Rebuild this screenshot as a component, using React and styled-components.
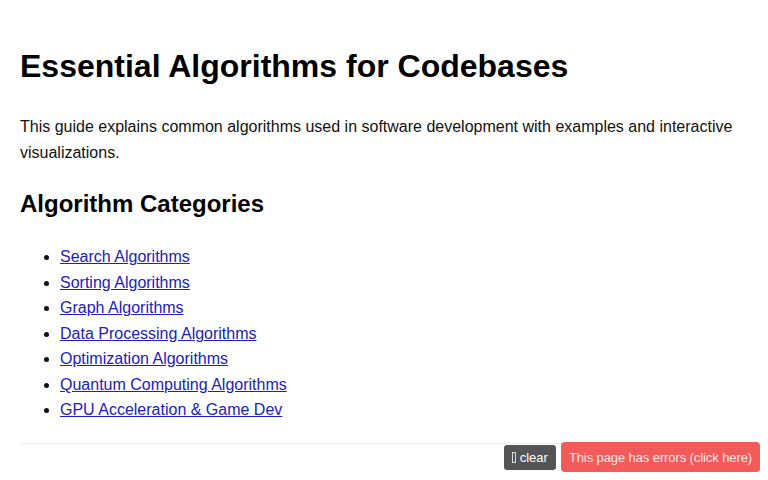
import React from "react";
import styled, { createGlobalStyle } from "styled-components";

const Global = createGlobalStyle`
  html, body { margin: 0; padding: 0; background: #fff; }
  body {
    font-family: "Liberation Sans", Arial, sans-serif;
    font-size: 16px;
    line-height: 1.6;
    color: #111;
  }
`;

const Page = styled.main`
  padding: 20px;
`;

const Title = styled.h1`
  font-size: 32px;
  line-height: 1.2;
  margin: 27px 0 29px;
  font-weight: bold;
  color: #000;
`;

const Intro = styled.p`
  margin: 0 0 16px;
`;

const SubTitle = styled.h2`
  font-size: 24px;
  line-height: 1.2;
  margin: 24px 0 26px;
  color: #000;
`;

const List = styled.ul`
  margin: 0 0 20px;
  padding-left: 40px;
`;

const Item = styled.li`
  line-height: 25.5px;
`;

const Link = styled.a`
  color: #2020c0;
  text-decoration: underline;
`;

const Rule = styled.hr`
  border: 0;
  border-top: 1px solid #eee;
  margin: 20px 0;
`;

const Toolbar = styled.div`
  position: fixed;
  right: 8px;
  bottom: 8px;
  display: flex;
  align-items: center;
  gap: 5px;
  font-family: "Liberation Sans", Arial, sans-serif;
  font-size: 13px;
  line-height: 1;
`;

const ClearButton = styled.button`
  display: flex;
  align-items: center;
  gap: 4px;
  height: 25px;
  padding: 0 8px;
  border: 0;
  border-radius: 3px;
  background: #555;
  color: #fff;
  font: inherit;
`;

const Tofu = styled.span`
  display: inline-block;
  width: 2px;
  height: 9px;
  border: 1px solid #ddd;
`;

const ErrorButton = styled.button`
  height: 30px;
  padding: 0 8px;
  border: 0;
  border-radius: 4px;
  background: #f55a5a;
  color: #fde8e8;
  font: inherit;
  letter-spacing: -0.1px;
`;

const links = [
  "Search Algorithms",
  "Sorting Algorithms",
  "Graph Algorithms",
  "Data Processing Algorithms",
  "Optimization Algorithms",
  "Quantum Computing Algorithms",
  "GPU Acceleration & Game Dev",
];

export default function App() {
  return (
    <>
      <Global />
      <Page>
        <Title>Essential Algorithms for Codebases</Title>
        <Intro>
          This guide explains common algorithms used in software development
          with examples and interactive visualizations.
        </Intro>
        <SubTitle>Algorithm Categories</SubTitle>
        <List>
          {links.map((l) => (
            <Item key={l}>
              <Link href="#">{l}</Link>
            </Item>
          ))}
        </List>
        <Rule />
      </Page>
      <Toolbar>
        <ClearButton>
          <Tofu />
          clear
        </ClearButton>
        <ErrorButton>This page has errors (click here)</ErrorButton>
      </Toolbar>
    </>
  );
}
